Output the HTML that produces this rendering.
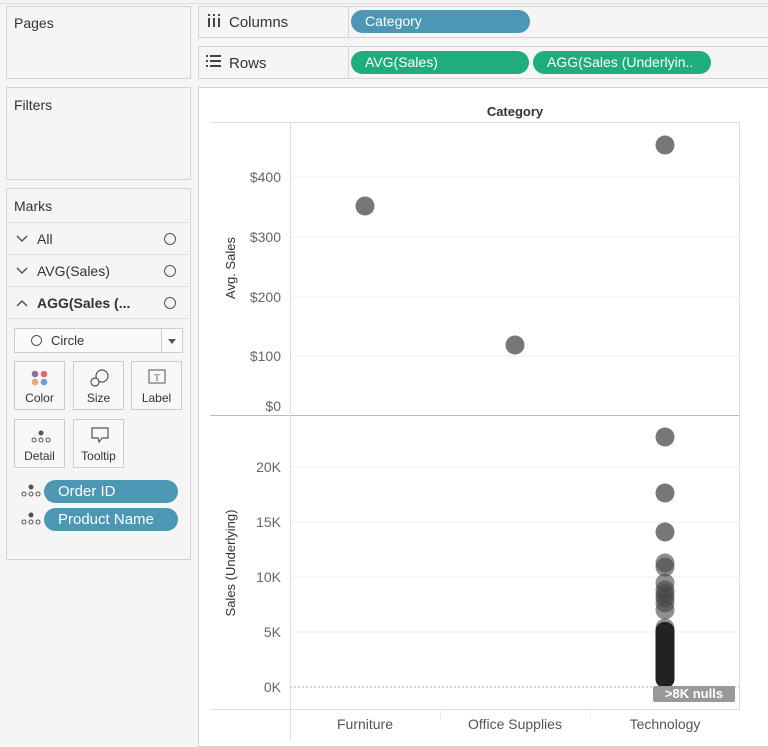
<!DOCTYPE html>
<html><head><meta charset="utf-8"><style>
*{box-sizing:border-box;margin:0;padding:0}
body{width:768px;height:739px;background:#f5f5f5;font-family:"Liberation Sans",sans-serif;color:#333;position:relative;overflow:hidden}
.p{position:absolute;background:#f5f5f5;border:1px solid #d4d4d4}
.t{position:absolute;font-size:14px;color:#333}
.pill{position:absolute;height:23px;border-radius:12px;color:#fff;font-size:14px;line-height:23px;padding-left:14px;white-space:nowrap;overflow:hidden}
.b{background:#4b97b4}.g{background:#1fae7b}
.row{position:absolute;left:7px;width:182px;height:32px;border-bottom:1px solid #e0e0e0;font-size:14px;line-height:32px;padding-left:30px}
.row .c{position:absolute;right:13px;top:10px;width:12px;height:12px;border:1.3px solid #555;border-radius:50%}
.row svg{position:absolute;left:9px;top:12px}
.card{position:absolute;width:51px;height:49px;border:1px solid #ccc;background:#f7f7f7;font-size:12px;text-align:center}
.card span{position:absolute;bottom:4px;left:0;right:0}
</style></head><body>
<div style="position:absolute;left:0;top:0;width:768px;height:4px;border-bottom:1px solid #ddd"></div>
<div class="p" style="left:6px;top:6px;width:185px;height:73px"></div><div class="t" style="left:14px;top:15px">Pages</div>
<div class="p" style="left:6px;top:87px;width:185px;height:93px"></div><div class="t" style="left:14px;top:97px">Filters</div>
<div class="p" style="left:6px;top:188px;width:185px;height:372px"></div><div class="t" style="left:14px;top:198px">Marks</div>
<div style="position:absolute;left:7px;top:222px;width:182px;border-top:1px solid #e0e0e0"></div>
<div class="row" style="top:223px"><svg width="12" height="8"><polyline points="1,1 6,6 11,1" fill="none" stroke="#555" stroke-width="1.5"/></svg>All<div class="c"></div></div>
<div class="row" style="top:255px"><svg width="12" height="8"><polyline points="1,1 6,6 11,1" fill="none" stroke="#555" stroke-width="1.5"/></svg>AVG(Sales)<div class="c"></div></div>
<div class="row" style="top:287px;font-weight:bold"><svg width="12" height="8"><polyline points="1,7 6,2 11,7" fill="none" stroke="#555" stroke-width="1.5"/></svg>AGG(Sales (...<div class="c"></div></div>
<div style="position:absolute;left:14px;top:328px;width:169px;height:25px;border:1px solid #ccc;background:#fafafa;font-size:13px;line-height:23px;padding-left:36px">Circle
<div style="position:absolute;left:16px;top:6px;width:11px;height:11px;border:1.2px solid #555;border-radius:50%"></div>
<div style="position:absolute;left:146px;top:0;height:23px;border-left:1px solid #ccc;width:22px"></div>
<div style="position:absolute;left:153px;top:10px;border:4px solid transparent;border-top:5px solid #555"></div></div>
<div class="card" style="left:14px;top:361px"><svg style="position:absolute;left:16px;top:8px" width="18" height="18"><circle cx="4" cy="4" r="3.3" fill="#8a6fa3"/><circle cx="13" cy="4" r="3.3" fill="#e06a6a"/><circle cx="4" cy="12" r="3.3" fill="#f0a673"/><circle cx="13" cy="12" r="3.3" fill="#6f9fd8"/></svg><span>Color</span></div>
<div class="card" style="left:73px;top:361px"><svg style="position:absolute;left:16px;top:7px" width="20" height="18" fill="none" stroke="#555" stroke-width="1.2"><circle cx="12" cy="7" r="6"/><circle cx="5" cy="13" r="4" fill="#f7f7f7"/></svg><span>Size</span></div>
<div class="card" style="left:131px;top:361px"><svg style="position:absolute;left:16px;top:7px" width="18" height="16"><rect x="1" y="1" width="16" height="13" fill="none" stroke="#555"/><text x="9" y="11.5" font-size="9" text-anchor="middle" font-family="Liberation Serif" fill="#555">T</text></svg><span>Label</span></div>
<div class="card" style="left:14px;top:419px"><svg style="position:absolute;left:15px;top:10px" width="22" height="14" fill="none" stroke="#555"><circle cx="11" cy="3" r="2" fill="#555"/><circle cx="4" cy="10" r="2"/><circle cx="11" cy="10" r="2"/><circle cx="18" cy="10" r="2"/></svg><span>Detail</span></div>
<div class="card" style="left:73px;top:419px"><svg style="position:absolute;left:17px;top:7px" width="18" height="18" fill="none" stroke="#555" stroke-width="1.2"><path d="M1 1H17V11H11L8 15L7 11H1Z"/></svg><span>Tooltip</span></div>
<svg style="position:absolute;left:20px;top:484px" width="22" height="14" fill="none" stroke="#555"><circle cx="11" cy="3" r="2" fill="#555"/><circle cx="4" cy="10" r="2"/><circle cx="11" cy="10" r="2"/><circle cx="18" cy="10" r="2"/></svg>
<div class="pill b" style="left:44px;top:480px;width:134px;font-size:15px">Order ID</div>
<svg style="position:absolute;left:20px;top:512px" width="22" height="14" fill="none" stroke="#555"><circle cx="11" cy="3" r="2" fill="#555"/><circle cx="4" cy="10" r="2"/><circle cx="11" cy="10" r="2"/><circle cx="18" cy="10" r="2"/></svg>
<div class="pill b" style="left:44px;top:508px;width:134px;font-size:15px">Product Name</div>

<div class="p" style="left:198px;top:6px;width:580px;height:32px"></div>
<div style="position:absolute;left:348px;top:6px;height:32px;border-left:1px solid #d4d4d4"></div>
<svg style="position:absolute;left:207px;top:14px" width="14" height="14" fill="#444"><rect x="1" y="0" width="2" height="2"/><rect x="6" y="0" width="2" height="2"/><rect x="11" y="0" width="2" height="2"/><rect x="1" y="4" width="2" height="9"/><rect x="6" y="4" width="2" height="9"/><rect x="11" y="4" width="2" height="9"/></svg>
<div class="t" style="left:229px;top:14px;font-size:15px">Columns</div>
<div class="pill b" style="left:351px;top:10px;width:179px">Category</div>
<div class="p" style="left:198px;top:46px;width:580px;height:33px"></div>
<div style="position:absolute;left:348px;top:46px;height:33px;border-left:1px solid #d4d4d4"></div>
<svg style="position:absolute;left:206px;top:55px" width="16" height="12" fill="#444"><rect x="0" y="0" width="2" height="2"/><rect x="4" y="0" width="11" height="2"/><rect x="0" y="5" width="2" height="2"/><rect x="4" y="5" width="11" height="2"/><rect x="0" y="10" width="2" height="2"/><rect x="4" y="10" width="11" height="2"/></svg>
<div class="t" style="left:229px;top:55px;font-size:15px">Rows</div>
<div class="pill g" style="left:351px;top:51px;width:178px">AVG(Sales)</div>
<div class="pill g" style="left:533px;top:51px;width:178px">AGG(Sales (Underlyin..</div>

<div style="position:absolute;left:198px;top:87px;width:580px;height:660px;background:#fff;border:1px solid #d4d4d4"></div>
<svg style="position:absolute;left:0;top:0" width="768" height="739" font-family="Liberation Sans">
<text x="515" y="116" font-size="13" font-weight="bold" fill="#333" text-anchor="middle">Category</text>
<g stroke="#efefef"><line x1="290" x2="740" y1="177" y2="177"/><line x1="290" x2="740" y1="237" y2="237"/><line x1="290" x2="740" y1="297" y2="297"/><line x1="290" x2="740" y1="356" y2="356"/>
<line x1="290" x2="740" y1="467" y2="467"/><line x1="290" x2="740" y1="522" y2="522"/><line x1="290" x2="740" y1="577" y2="577"/><line x1="290" x2="740" y1="632" y2="632"/></g>
<line x1="290" x2="740" y1="687" y2="687" stroke="#aaa" stroke-dasharray="2,2"/>
<g stroke="#ddd" fill="none"><line x1="210" x2="740" y1="122.5" y2="122.5"/><line x1="210" x2="740" y1="415.5" y2="415.5" stroke="#bbb"/><line x1="210" x2="740" y1="709.5" y2="709.5"/><line x1="290.5" x2="290.5" y1="122" y2="739"/><line x1="739.5" x2="739.5" y1="122" y2="710"/><line x1="440.5" x2="440.5" y1="710" y2="720" stroke="#eee"/><line x1="590.5" x2="590.5" y1="710" y2="720" stroke="#eee"/></g>
<g font-size="14" fill="#666" text-anchor="end">
<text x="281" y="182">$400</text><text x="281" y="242">$300</text><text x="281" y="302">$200</text><text x="281" y="361">$100</text><text x="281" y="411">$0</text>
<text x="281" y="472">20K</text><text x="281" y="527">15K</text><text x="281" y="582">10K</text><text x="281" y="637">5K</text><text x="281" y="692">0K</text></g>
<text transform="translate(235,268) rotate(-90)" font-size="13" fill="#333" text-anchor="middle">Avg. Sales</text>
<text transform="translate(235,563) rotate(-90)" font-size="13" fill="#333" text-anchor="middle">Sales (Underlying)</text>
<g font-size="14" fill="#555" text-anchor="middle"><text x="365" y="729">Furniture</text><text x="515" y="729">Office Supplies</text><text x="665" y="729">Technology</text></g>
<g fill="#777"><circle cx="365" cy="206" r="9.5"/><circle cx="515" cy="345" r="9.5"/><circle cx="665" cy="145" r="9.5"/>
<circle cx="665" cy="437" r="9.5"/><circle cx="665" cy="493" r="9.5"/><circle cx="665" cy="532" r="9.5"/></g>
<g fill="#444" fill-opacity="0.6"><circle cx="665" cy="563" r="9.5"/><circle cx="665" cy="567" r="9.5"/><circle cx="665" cy="583" r="9.5"/><circle cx="665" cy="590" r="9.5"/><circle cx="665" cy="594" r="9.5"/><circle cx="665" cy="598" r="9.5"/><circle cx="665" cy="603" r="9.5"/><circle cx="665" cy="610" r="9.5"/><circle cx="665" cy="628" r="9.5"/><circle cx="665" cy="634" r="9.5"/></g>
<rect x="655.5" y="622" width="19" height="66" rx="9" fill="#222"/>
<rect x="653" y="686" width="82" height="16" rx="2" fill="#999"/>
<text x="694" y="698" font-size="13" font-weight="bold" fill="#fff" text-anchor="middle">&gt;8K nulls</text>
</svg>
</body></html>
